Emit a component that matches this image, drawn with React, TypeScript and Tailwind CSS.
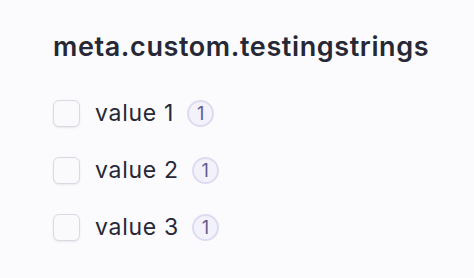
const values = ['value 1', 'value 2', 'value 3']

export default function App() {
  return (
    <div
      className="w-[474px] h-[278px] bg-[#fbfbfd] pl-[53px] pt-[31px]"
      style={{ fontFamily: 'Inter, "Noto Sans", sans-serif' }}
    >
      <h2 className="text-[27px] leading-[32px] font-semibold text-[#272836] tracking-[0.6px]">
        meta.custom.testingstrings
      </h2>
      <div className="mt-[37px] flex flex-col gap-[30px]">
        {values.map((v) => (
          <label key={v} className="flex items-center h-[27px]">
            <span className="w-[27px] h-[27px] rounded-[6px] border border-[#d9d9e3] bg-[#fafafc] shadow-[0_1px_2px_rgba(0,0,0,0.08)]" />
            <span className="ml-[15px] text-[23px] text-[#272836] tracking-[0.7px]">{v}</span>
            <span className="ml-[13px] w-[27px] h-[27px] rounded-full border-2 border-[#dcdbf0] bg-[#f3f2fb] flex items-center justify-center text-[18px] text-[#5c5b8c]">
              1
            </span>
          </label>
        ))}
      </div>
    </div>
  )
}
